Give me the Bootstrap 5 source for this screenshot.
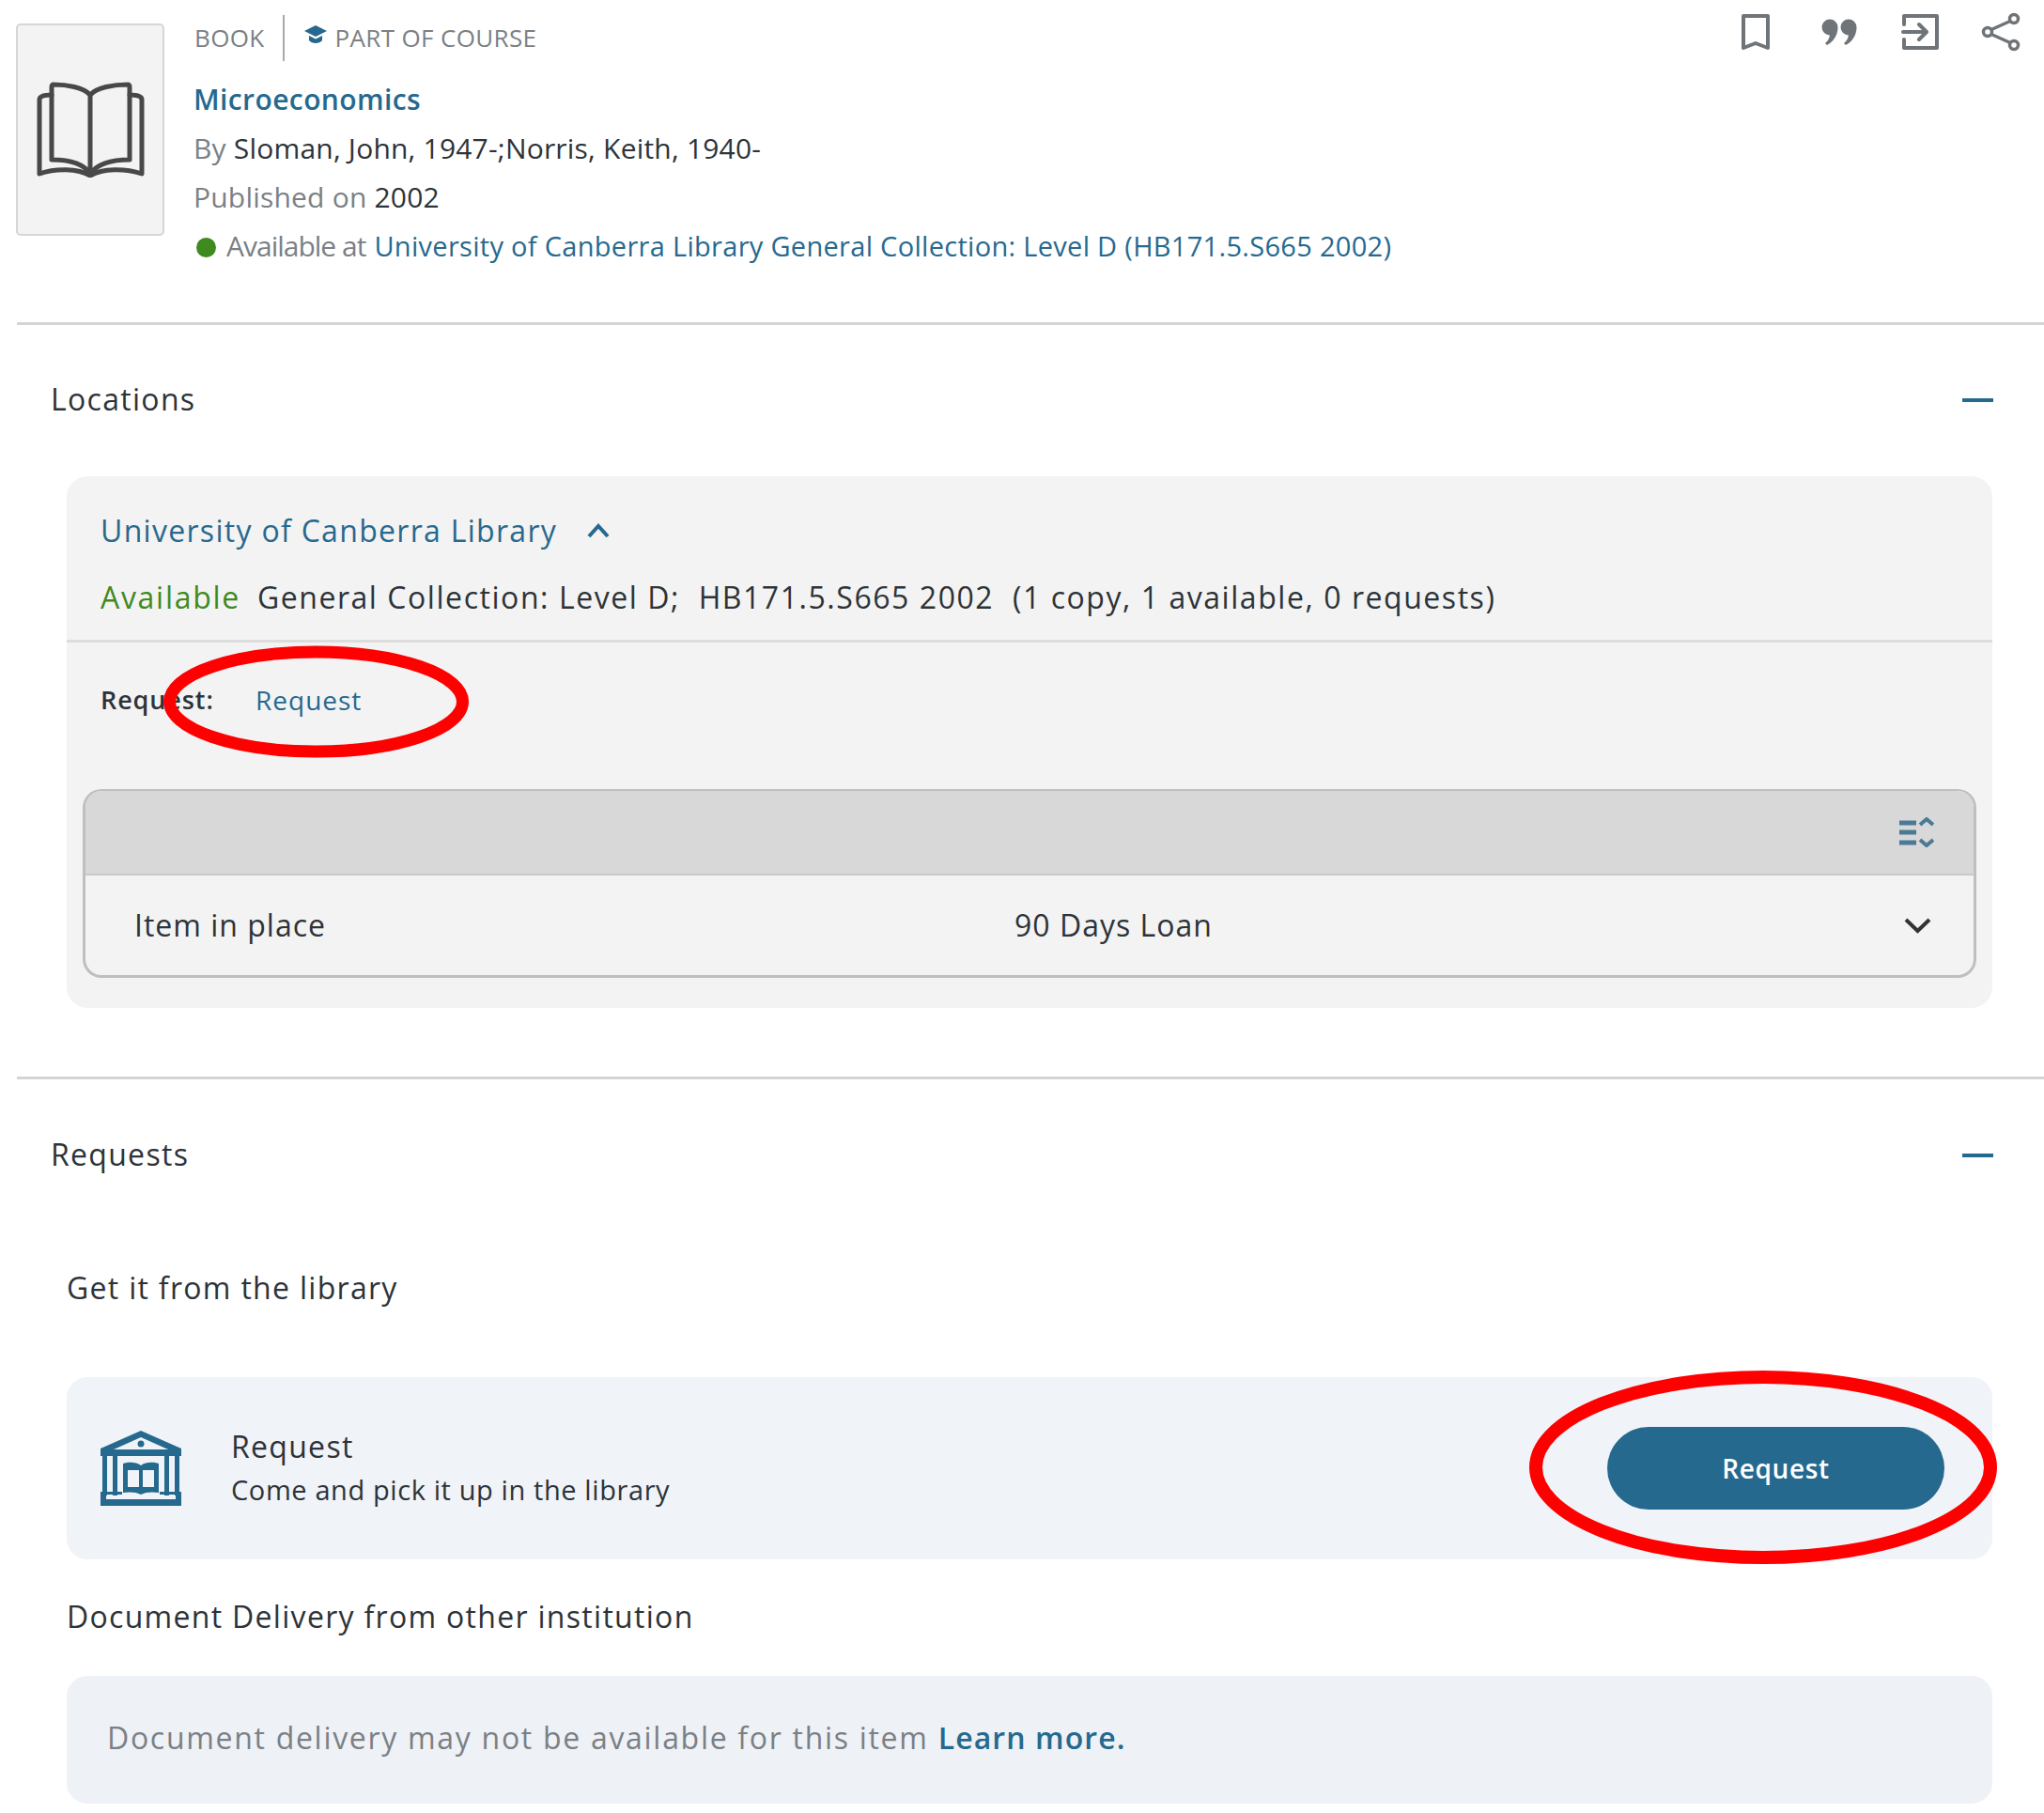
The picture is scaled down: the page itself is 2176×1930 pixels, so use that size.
<!DOCTYPE html>
<html lang="en">
<head>
  <meta charset="UTF-8" />
  <meta name="viewport" content="width=device-width, initial-scale=1.0"/>
  <title>Microeconomics - Request</title>
  <link href="https://cdn.jsdelivr.net/npm/bootstrap@5.3.3/dist/css/bootstrap.min.css" rel="stylesheet">
  <style>
    body {
      background-color: #fff;
      font-family: "Open Sans", "Noto Sans", sans-serif;
      color: #2d3338;
      font-size: 32px;
      letter-spacing: 1.3px;
      line-height: 42px;
      margin: 0;
    }
    a { color: #26698f; text-decoration: none; }

    .page-root { position: relative; width: 2176px; height: 1930px; padding-left: 18px; overflow: hidden; }
    .circle-mark { position: absolute; }
    .circle-one { left: 173px; top: 687px; width: 327px; height: 120px; }
    .circle-two { left: 1628px; top: 1459px; width: 498px; height: 206px; }

    .rec-head { height: 346px; padding-top: 25px; border-bottom: 3px solid #d4d4d4; }
    .thumb-box { width: 158px; height: 226px; margin-left: -1px; background: #f3f3f3; border: 2px solid #d6d6d6; border-radius: 5px; }
    .rec-meta { margin-left: 31px; margin-top: -25px; flex: 1; }
    .type-line { height: 62px; color: #7b8085; font-size: 26px; letter-spacing: .35px; margin-top: 9px; margin-left: 1px; }
    .type-split { width: 2px; height: 49px; background: #a9a9a9; margin: 0 21px 0 19px; }
    .cap-icon { width: 24px; height: 20px; margin-right: 9px; margin-bottom: 6px; }
    .meta-line { height: 52px; line-height: 52px; font-size: 30px; letter-spacing: .2px; white-space: nowrap; }
    .rec-title { font-weight: 600; margin-top: 9px; letter-spacing: .4px; }
    .muted-txt { color: #7b8085; }
    .avail-at { letter-spacing: -1px; margin-right: 1px; }
    .avail-dot { width: 21px; height: 21px; border-radius: 50%; background: #3f8a1f; margin: 0 11px 0 3px; display: inline-block; vertical-align: -1px; }
    .avail-link { font-weight: 500; font-size: 29px; letter-spacing: .3px; }
    .rec-actions { margin-right: 3px; margin-top: -25px; }
    .act-box { width: 86px; height: 68px; }
    .mark-act { margin-right: 3px; margin-left: -3px; }

    .sect-head { height: 42px; margin: 58px 54px 61px 36px; }
    .sect-minus { width: 33px; height: 4px; margin-top: 2px; background: #26698f; }
    .loc-panel { margin: 0 55px 73px 53px; background: #f3f3f3; border-radius: 22px; height: 566px; }
    .loc-top { padding: 37px 36px 24px; border-bottom: 3px solid #dcdcdc; height: 177px; }
    .title-chev { margin-left: 31px; }
    .avail-row { margin-top: 29px; white-space: nowrap; letter-spacing: 1.55px; }
    .avail-word { color: #3f8a1f; margin-right: 18px; letter-spacing: 1.7px; }
    .req-row { padding: 40px 36px 0; height: 156px; font-size: 28px; letter-spacing: 1px; }
    .req-label { font-weight: 600; width: 165px; font-size: 27px; letter-spacing: .9px; }
    .item-box { margin: 0 17px 0 17px; height: 201px; border: 3px solid #bfbfbf; border-top-width: 2px; border-radius: 20px; overflow: hidden; }
    .item-top { height: 90px; background: #d8d8d8; border-bottom: 2px solid #c9c9c9; padding-right: 42px; }
    .item-row { height: 106px; padding: 0 45px 0 52px; letter-spacing: 1px; }
    .item-col { width: 937px; }
    .req-sect { border-top: 3px solid #d4d4d4; }
    .req-head { margin: 59px 54px 0 36px; height: 42px; }
    .sub-title { margin-left: 53px; height: 42px; }
    .get-title { margin-top: 100px; }
    .req-card { margin: 74px 55px 40px 53px; height: 194px; background: #f0f3f8; border-radius: 22px; padding: 0 51px 0 36px; }
    .lib-icon { width: 86px; height: 80px; margin-right: 53px; }
    .req-text { padding-top: 8px; }
    .req-name { line-height: 40px; margin-top: -2px; }
    .req-sub { font-size: 29px; letter-spacing: .6px; line-height: 52px; }
    .req-btn { width: 359px; height: 88px; background: #26698f; color: #fff; font-size: 28px; font-weight: 600; letter-spacing: .6px; border: 0; }
    .req-btn:hover { background: #26698f; color: #fff; }
    .doc-card { margin: 42px 55px 0 53px; height: 136px; background: #eef1f6; border-radius: 22px; padding: 0 0 5px 43px; color: #7b8085; letter-spacing: 1.7px; }
    .doc-card a { font-weight: 600; letter-spacing: 1.1px; }
  </style>
</head>
<body>
  <div class="page-root">
    <div class="rec-head d-flex align-items-start">
      <div class="thumb-box d-flex align-items-center justify-content-center flex-shrink-0">
        <svg width="115" height="102" viewBox="0 0 115 102" fill="none" stroke="#484848" stroke-width="5" stroke-linejoin="round" stroke-linecap="round">
          <path d="M16 14C10 14 3 15 3 19V98C20 92 44 92 57 100C70 92 94 92 112 98V19C112 15 105 14 99 14"/>
          <path d="M57 14C50 6 32 3 18 3Q16 3 16 6V83C34 83 50 87 57 98"/>
          <path d="M57 14C64 6 82 3 97 3Q99 3 99 6V83C81 83 65 87 57 98"/>
          <path d="M57 14V100"/>
        </svg>
      </div>
      <div class="rec-meta">
        <div class="type-line d-flex align-items-center">
          <span>BOOK</span>
          <span class="type-split"></span>
          <svg class="cap-icon" viewBox="0 0 24 20"><path fill="#26698f" d="M12 0L24 6L12 12L0 6Z"/><path fill="#26698f" d="M5 11L12 14.500L19 11V16C16 20 8 20 5 16Z"/></svg>
          <span>PART OF COURSE</span>
        </div>
        <div class="meta-line rec-title"><a href="#">Microeconomics</a></div>
        <div class="meta-line"><span class="muted-txt">By</span> Sloman, John, 1947-;Norris, Keith, 1940-</div>
        <div class="meta-line"><span class="muted-txt">Published on</span> 2002</div>
        <div class="meta-line"><span class="avail-dot"></span><span class="muted-txt avail-at">Available at</span> <a href="#" class="avail-link">University of Canberra Library General Collection: Level D (HB171.5.S665 2002)</a></div>
      </div>
      <div class="rec-actions d-flex">
        <div class="act-box mark-act d-flex align-items-center justify-content-center">
          <svg width="30" height="38" viewBox="0 0 30 38" fill="none" stroke="#6f7479" stroke-width="4" stroke-linejoin="round"><path d="M2 2H28V36L15 31L2 36Z"/></svg>
        </div>
        <div class="act-box d-flex align-items-center justify-content-center">
          <svg width="38" height="28" viewBox="0 0 38 28" fill="#6f7479"><circle cx="9" cy="9" r="8.500"/><path d="M17.500 10C17 18 13 24 6 28L4 26C8 23 9 19 9 15Z"/><circle cx="29" cy="9" r="8.500"/><path d="M37.500 10C37 18 33 24 26 28L24 26C28 23 29 19 29 15Z"/></svg>
        </div>
        <div class="act-box d-flex align-items-center justify-content-center">
          <svg width="40" height="38" viewBox="0 0 40 38" fill="none" stroke="#6f7479" stroke-width="4" stroke-linecap="round" stroke-linejoin="round"><path d="M3 11V2H38V36H3V27"/><path d="M2 19H27M19 11L27 19L19 27"/></svg>
        </div>
        <div class="act-box d-flex align-items-center justify-content-center">
          <svg width="42" height="42" viewBox="0 0 42 42" fill="none" stroke="#6f7479" stroke-width="3.500"><circle cx="7" cy="21" r="4.500"/><circle cx="35" cy="7" r="4.500"/><circle cx="35" cy="35" r="4.500"/><path d="M11 18.500L31 9.500M11 23.500L31 32.500"/></svg>
        </div>
      </div>
    </div>

    <div class="sect-head d-flex justify-content-between align-items-center">
      <span>Locations</span><span class="sect-minus"></span>
    </div>
    <div class="loc-panel">
      <div class="loc-top">
        <div class="d-flex align-items-center">
          <a href="#">University of Canberra Library</a>
          <svg class="title-chev" width="26" height="18" viewBox="0 0 26 18" fill="none" stroke="#26698f" stroke-width="4"><path d="M3 15L13 4L23 15"/></svg>
        </div>
        <div class="avail-row"><span class="avail-word">Available</span>General Collection: Level D;&nbsp; HB171.5.S665 2002&nbsp; (1 copy, 1 available, 0 requests)</div>
      </div>
      <div class="req-row d-flex">
        <span class="req-label">Request:</span><a href="#">Request</a>
      </div>
      <div class="item-box">
        <div class="item-top d-flex align-items-center justify-content-end">
          <svg width="37" height="32" viewBox="0 0 37 32" fill="none" stroke="#4a7a96" stroke-width="4"><path d="M0 6H18M0 16H18M0 27H18" stroke-width="5"/><path d="M22 8L29 2L36 8M22 24L29 30L36 24"/></svg>
        </div>
        <div class="item-row d-flex align-items-center">
          <span class="item-col">Item in place</span>
          <span class="flex-grow-1">90 Days Loan</span>
          <svg width="29" height="18" viewBox="0 0 29 18" fill="none" stroke="#333" stroke-width="4"><path d="M2 3L14.500 15L27 3"/></svg>
        </div>
      </div>
    </div>

    <div class="req-sect">
      <div class="req-head d-flex justify-content-between align-items-center">
        <span>Requests</span><span class="sect-minus"></span>
      </div>
      <div class="sub-title get-title">Get it from the library</div>
      <div class="req-card d-flex align-items-center">
        <svg class="lib-icon" viewBox="0 0 86 80" fill="#26698f">
          <path fill-rule="evenodd" d="M43 0L86 19V27H0V19ZM43 7L14 20H72Z"/>
          <circle cx="43" cy="14" r="3.500"/>
          <path d="M2 27H7V69H2ZM13 27H18V69H13ZM68 27H73V69H68ZM79 27H84V69H79Z"/>
          <path fill-rule="evenodd" d="M24 35C30 33 38 33 43 37C48 33 56 33 62 35V66C56 65 48 65 43 68C38 65 30 65 24 66ZM29 42V60H41V42ZM45 42V60H57V42Z"/>
          <path d="M0 65H23V68H6V73H0ZM63 65H86V73H80V68H63ZM0 73H86V80H0Z"/>
        </svg>
        <div class="req-text flex-grow-1">
          <div class="req-name">Request</div>
          <div class="req-sub">Come and pick it up in the library</div>
        </div>
        <a href="#" class="btn rounded-pill req-btn d-flex align-items-center justify-content-center">Request</a>
      </div>
      <div class="sub-title">Document Delivery from other institution</div>
      <div class="doc-card d-flex align-items-center">
        <span>Document delivery may not be available for this item <a href="#">Learn more.</a></span>
      </div>
    </div>

    <svg class="circle-mark circle-one" viewBox="0 0 327 120" fill="none" stroke="#f00" stroke-width="13"><ellipse cx="163.500" cy="60" rx="156" ry="53"/></svg>
    <svg class="circle-mark circle-two" viewBox="0 0 498 206" fill="none" stroke="#f00" stroke-width="14"><ellipse cx="249" cy="103" rx="242" ry="96"/></svg>
  </div>
</body>
</html>
